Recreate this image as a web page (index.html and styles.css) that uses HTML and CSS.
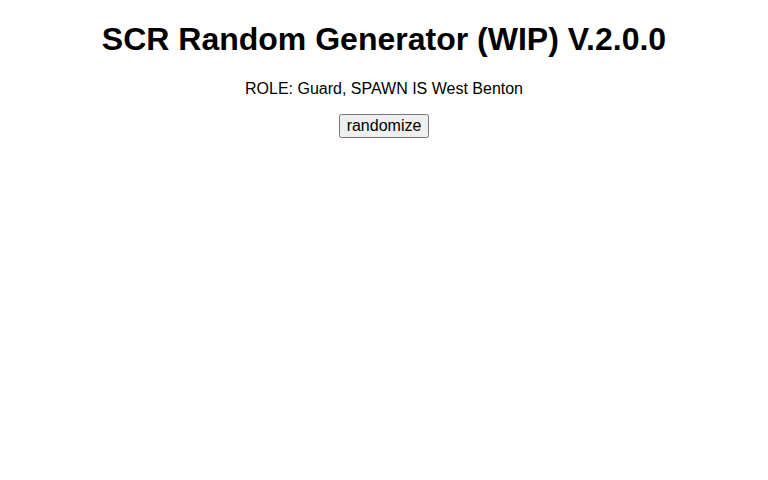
FILE: index.html
```html
<!DOCTYPE html>
<html lang="en">
  <head>
    <meta charset="UTF-8" />
    <meta name="viewport" content="width=device-width, initial-scale=1.0" />
    <title>SCR Random Generator</title>
    <link rel="stylesheet" href="styles.css">
  </head>
  <body>
    <h1 class="title">SCR Random Generator (WIP) V.2.0.0</h1>
    <p id="result" class="result">ROLE: Guard, SPAWN IS West Benton</p>
    <button id="randomize" class="randomize-button">randomize</button>
  </body>
</html>
```

FILE: styles.css
```css
body {
  font-family: "Liberation Sans", Arial, sans-serif;
  text-align: center;
}
.title {
  font-size: 32px;
  margin: 13.44px 0 21.44px;
}
.result {
  font-size: 16px;
}
.randomize-button {
  font-family: "Liberation Sans", Arial, sans-serif;
  font-size: 16px;
}
```
